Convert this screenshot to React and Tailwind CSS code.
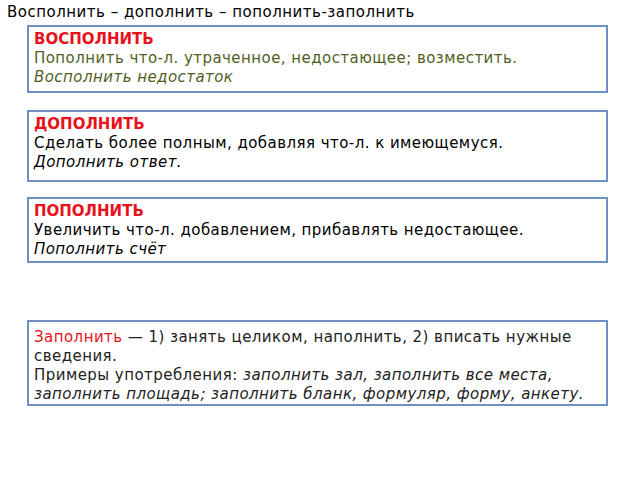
import React from 'react';

const Box = ({ className, children }) => (
  <div className={`ml-[27px] w-[581px] border-2 border-[#6d90c6] bg-white px-[5px] py-[3px] text-[15px] tracking-[0.45px] leading-[19px] ${className}`}>
    {children}
  </div>
);

export default function App() {
  return (
    <div className="w-[640px] h-[480px] bg-white overflow-hidden text-black" style={{ fontFamily: '"DejaVu Sans", sans-serif' }}>
      <div className="pl-[7px] pt-[3px] text-[15px] tracking-[0.5px] leading-[18px]">Восполнить – дополнить – пополнить-заполнить</div>
      <Box className="mt-[4px] h-[68px]">
        <div className="font-bold text-[#e8121c] tracking-normal">ВОСПОЛНИТЬ</div>
        <div className="text-[#4f5f24]">Пополнить что-л. утраченное, недостающее; возместить.</div>
        <div className="italic text-[#4f5f24]">Восполнить недостаток</div>
      </Box>
      <Box className="mt-[17px] h-[72px]">
        <div className="font-bold text-[#e8121c] tracking-normal">ДОПОЛНИТЬ</div>
        <div>Сделать более полным, добавляя что-л. к имеющемуся.</div>
        <div className="italic">Дополнить ответ.</div>
      </Box>
      <Box className="mt-[15px] h-[66px]">
        <div className="font-bold text-[#e8121c] tracking-normal">ПОПОЛНИТЬ</div>
        <div>Увеличить что-л. добавлением, прибавлять недостающее.</div>
        <div className="italic">Пополнить счёт</div>
      </Box>
      <Box className="mt-[57px] h-[86px] pt-[6px] text-[#222]">
        <div><span className="text-[#e8121c]">Заполнить</span> — 1) занять целиком, наполнить, 2) вписать нужные сведения.</div>
        <div>Примеры употребления: <i>заполнить зал, заполнить все места, заполнить площадь; заполнить бланк, формуляр, форму, анкету.</i></div>
      </Box>
    </div>
  );
}
